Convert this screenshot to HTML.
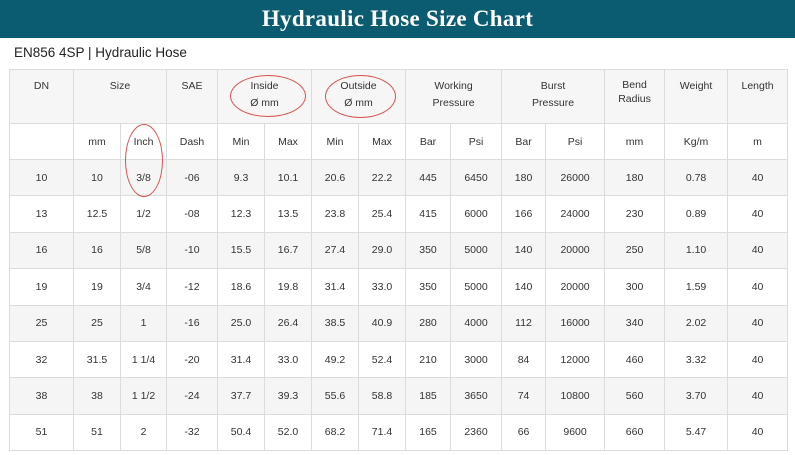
<!DOCTYPE html>
<html><head><meta charset="utf-8"><style>
*{margin:0;padding:0;box-sizing:border-box}
body{width:795px;height:455px;overflow:hidden;background:#fff;font-family:"Liberation Sans",sans-serif;color:#333;position:relative}
.bar{position:absolute;left:0;top:0;width:795px;height:38px;background:#0b5c70;color:#fff;font-family:"Liberation Serif",serif;font-size:23px;font-weight:bold;text-align:center;line-height:38px;letter-spacing:0.3px}
.sub{position:absolute;left:14px;top:45px;font-size:13.5px;color:#222}
table{position:absolute;left:9px;top:69px;width:778px;border-collapse:collapse;table-layout:fixed;font-size:10.5px}
td{border:1px solid #dcdcdc;text-align:center;vertical-align:middle}
tr.h1 td{height:54px;background:#f6f6f6;vertical-align:top;padding-top:8px;line-height:17px}
tr.h2 td{height:36px;background:#fff}
tr.d td{height:36.4px}
tr.g td{background:#f5f5f5}
.ov{position:absolute;border:1px solid #d9534f;border-radius:50%}
</style></head><body>
<div class="bar">Hydraulic Hose Size Chart</div>
<div class="sub">EN856 4SP | Hydraulic Hose</div>
<table>
<colgroup><col style="width:64px"><col style="width:47px"><col style="width:46px"><col style="width:51px"><col style="width:47px"><col style="width:47px"><col style="width:47px"><col style="width:47px"><col style="width:45px"><col style="width:51px"><col style="width:44px"><col style="width:59px"><col style="width:60px"><col style="width:63px"><col style="width:60px"></colgroup>
<tr class="h1"><td>DN</td><td colspan="2">Size</td><td>SAE</td><td colspan="2">Inside<br>Ø mm</td><td colspan="2">Outside<br>Ø mm</td><td colspan="2">Working<br>Pressure</td><td colspan="2">Burst<br>Pressure</td><td style="line-height:14px">Bend<br>Radius</td><td>Weight</td><td>Length</td></tr>
<tr class="h2"><td></td><td>mm</td><td>Inch</td><td>Dash</td><td>Min</td><td>Max</td><td>Min</td><td>Max</td><td>Bar</td><td>Psi</td><td>Bar</td><td>Psi</td><td>mm</td><td>Kg/m</td><td>m</td></tr>
<tr class="d g"><td>10</td><td>10</td><td>3/8</td><td>-06</td><td>9.3</td><td>10.1</td><td>20.6</td><td>22.2</td><td>445</td><td>6450</td><td>180</td><td>26000</td><td>180</td><td>0.78</td><td>40</td></tr>
<tr class="d"><td>13</td><td>12.5</td><td>1/2</td><td>-08</td><td>12.3</td><td>13.5</td><td>23.8</td><td>25.4</td><td>415</td><td>6000</td><td>166</td><td>24000</td><td>230</td><td>0.89</td><td>40</td></tr>
<tr class="d g"><td>16</td><td>16</td><td>5/8</td><td>-10</td><td>15.5</td><td>16.7</td><td>27.4</td><td>29.0</td><td>350</td><td>5000</td><td>140</td><td>20000</td><td>250</td><td>1.10</td><td>40</td></tr>
<tr class="d"><td>19</td><td>19</td><td>3/4</td><td>-12</td><td>18.6</td><td>19.8</td><td>31.4</td><td>33.0</td><td>350</td><td>5000</td><td>140</td><td>20000</td><td>300</td><td>1.59</td><td>40</td></tr>
<tr class="d g"><td>25</td><td>25</td><td>1</td><td>-16</td><td>25.0</td><td>26.4</td><td>38.5</td><td>40.9</td><td>280</td><td>4000</td><td>112</td><td>16000</td><td>340</td><td>2.02</td><td>40</td></tr>
<tr class="d"><td>32</td><td>31.5</td><td>1 1/4</td><td>-20</td><td>31.4</td><td>33.0</td><td>49.2</td><td>52.4</td><td>210</td><td>3000</td><td>84</td><td>12000</td><td>460</td><td>3.32</td><td>40</td></tr>
<tr class="d g"><td>38</td><td>38</td><td>1 1/2</td><td>-24</td><td>37.7</td><td>39.3</td><td>55.6</td><td>58.8</td><td>185</td><td>3650</td><td>74</td><td>10800</td><td>560</td><td>3.70</td><td>40</td></tr>
<tr class="d"><td>51</td><td>51</td><td>2</td><td>-32</td><td>50.4</td><td>52.0</td><td>68.2</td><td>71.4</td><td>165</td><td>2360</td><td>66</td><td>9600</td><td>660</td><td>5.47</td><td>40</td></tr>
</table>
<div class="ov" style="left:230px;top:75px;width:76px;height:42px"></div>
<div class="ov" style="left:325px;top:75px;width:71px;height:43px"></div>
<div class="ov" style="left:125px;top:124px;width:38px;height:73px"></div>
</body></html>
